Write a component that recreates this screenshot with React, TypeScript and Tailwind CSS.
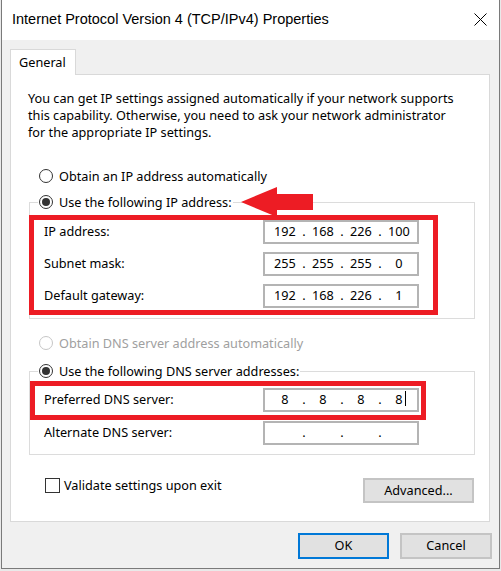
import type { ReactNode } from 'react';

const BODY_FONT = { fontFamily: '"Noto Sans", "Open Sans", sans-serif' };
const TITLE_FONT = { fontFamily: '"Liberation Sans", Arial, sans-serif' };

function Radio({ checked, disabled, children }: { checked?: boolean; disabled?: boolean; children: ReactNode }) {
  return (
    <div className={`flex items-center gap-[6px] leading-[16px] ${disabled ? 'text-[#a0a0a0]' : 'text-black'}`}>
      <span
        className={`w-[14px] h-[14px] rounded-full border bg-white flex items-center justify-center shrink-0 ${
          disabled ? 'border-[#c6c6c6]' : 'border-[#333333]'
        }`}
      >
        {checked && <span className="w-[8px] h-[8px] rounded-full bg-[#333333]" />}
      </span>
      <span>{children}</span>
    </div>
  );
}

function IpField({ octets, caret }: { octets: string[]; caret?: boolean }) {
  return (
    <div className="w-[156px] h-[24px] border-2 border-[#b4b4b4] bg-white flex items-center pl-[5px] text-black">
      {octets.map((o, i) => (
        <div key={i} className="flex items-center">
          {i > 0 && <span className="w-[8px] text-center">.</span>}
          <span className="w-[30px] text-center relative">
            {o}
            {caret && i === 3 && <span className="absolute right-[8px] top-[1px] w-px h-[15px] bg-black" />}
          </span>
        </div>
      ))}
    </div>
  );
}

function Row({ label, octets, labelW, labelPl, caret }: { label: string; octets: string[]; labelW: string; labelPl: string; caret?: boolean }) {
  return (
    <div className="flex items-center h-[24px]">
      <span className={`${labelW} ${labelPl}`}>{label}</span>
      <IpField octets={octets} caret={caret} />
    </div>
  );
}

export default function App() {
  return (
    <div className="relative w-[501px] h-[571px] bg-[#e9e9e9] text-[12.7px] text-black" style={BODY_FONT}>
      <div className="ml-px w-[499px] h-[569px] border-x border-b border-[#7a7a7a] bg-[#f0f0f0] flex flex-col">
        {/* Title bar */}
        <div className="h-[40px] bg-white flex items-center justify-between pl-[10px] pr-[12px] shrink-0">
          <span className="text-[14.5px]" style={TITLE_FONT}>Internet Protocol Version 4 (TCP/IPv4) Properties</span>
          <svg width="13" height="13" viewBox="0 0 13 13" className="mb-[1px]">
            <path d="M0.5 0.5 L12.5 12.5 M12.5 0.5 L0.5 12.5" stroke="#000" strokeWidth="1" />
          </svg>
        </div>

        {/* Tabs */}
        <div className="pl-[8px] pt-[9px]">
          <div className="relative z-10 -mb-px w-[66px] h-[26px] bg-white border border-b-0 border-[#d9d9d9] pl-[8px] pt-[4px] leading-[16px]">
            General
          </div>
          <div className="w-[480px] h-[448px] border border-[#d9d9d9] bg-white">
            <p className="pl-[17px] pt-[15px] leading-[17px]">
              You can get IP settings assigned automatically if your network supports
              <br />
              this capability. Otherwise, you need to ask your network administrator
              <br />
              for the appropriate IP settings.
            </p>

            <div className="pl-[28px] mt-[27px]">
              <Radio>Obtain an IP address automatically</Radio>
            </div>

            <fieldset className="ml-[18px] mt-[10px] w-[446px] border border-[#dcdcdc] pb-[3px]">
              <legend className="ml-[8px] px-px">
                <Radio checked>Use the following IP address:</Radio>
              </legend>
              <div className="-ml-px mt-[5px] w-[409px] border-[5px] border-[#ed1c24] flex flex-col gap-[8px] pb-[2px]">
                <Row label="IP address:" octets={['192', '168', '226', '100']} labelW="w-[229px]" labelPl="pl-[10px]" />
                <Row label="Subnet mask:" octets={['255', '255', '255', '0']} labelW="w-[229px]" labelPl="pl-[10px]" />
                <Row label="Default gateway:" octets={['192', '168', '226', '1']} labelW="w-[229px]" labelPl="pl-[10px]" />
              </div>
            </fieldset>

            <div className="pl-[28px] mt-[16px]">
              <Radio disabled>Obtain DNS server address automatically</Radio>
            </div>

            <fieldset className="ml-[18px] mt-[12px] w-[446px] border border-[#dcdcdc] pb-[9px]">
              <legend className="ml-[8px] px-px">
                <Radio checked>Use the following DNS server addresses:</Radio>
              </legend>
              <div className="mt-[2px] w-[396px] border-[5px] border-[#ed1c24] pt-[2px] pb-[3px]">
                <Row label="Preferred DNS server:" octets={['8', '8', '8', '8']} labelW="w-[228px]" labelPl="pl-[9px]" caret />
              </div>
              <div className="mt-[1px]">
                <Row label="Alternate DNS server:" octets={['', '', '', '']} labelW="w-[233px]" labelPl="pl-[14px]" />
              </div>
            </fieldset>

            <div className="flex justify-between items-start mt-[22px] pl-[34px] pr-[15px]">
              <label className="flex items-center gap-[4px] leading-[16px]">
                <span className="w-[15px] h-[15px] border border-[#333333] bg-white" />
                <span>Validate settings upon exit</span>
              </label>
              <button className="mt-px w-[111px] h-[25px] bg-[#e1e1e1] border-2 border-[#c4c4c4]">Advanced...</button>
            </div>
          </div>
        </div>

        {/* Dialog buttons */}
        <div className="flex justify-end gap-[11px] mt-[11px] pr-[7px]">
          <button className="w-[91px] h-[26px] bg-[#e1e1e1] border-2 border-[#0078d7]">OK</button>
          <button className="w-[92px] h-[26px] bg-[#e1e1e1] border-2 border-[#c4c4c4]">Cancel</button>
        </div>
      </div>

      {/* Annotation arrow */}
      <svg className="absolute left-[240px] top-[186px]" width="74" height="32" viewBox="0 0 74 32">
        <polygon points="1,16 37,1 37,8 73,8 73,24 37,24 37,31" fill="#ed1c24" />
      </svg>
    </div>
  );
}
